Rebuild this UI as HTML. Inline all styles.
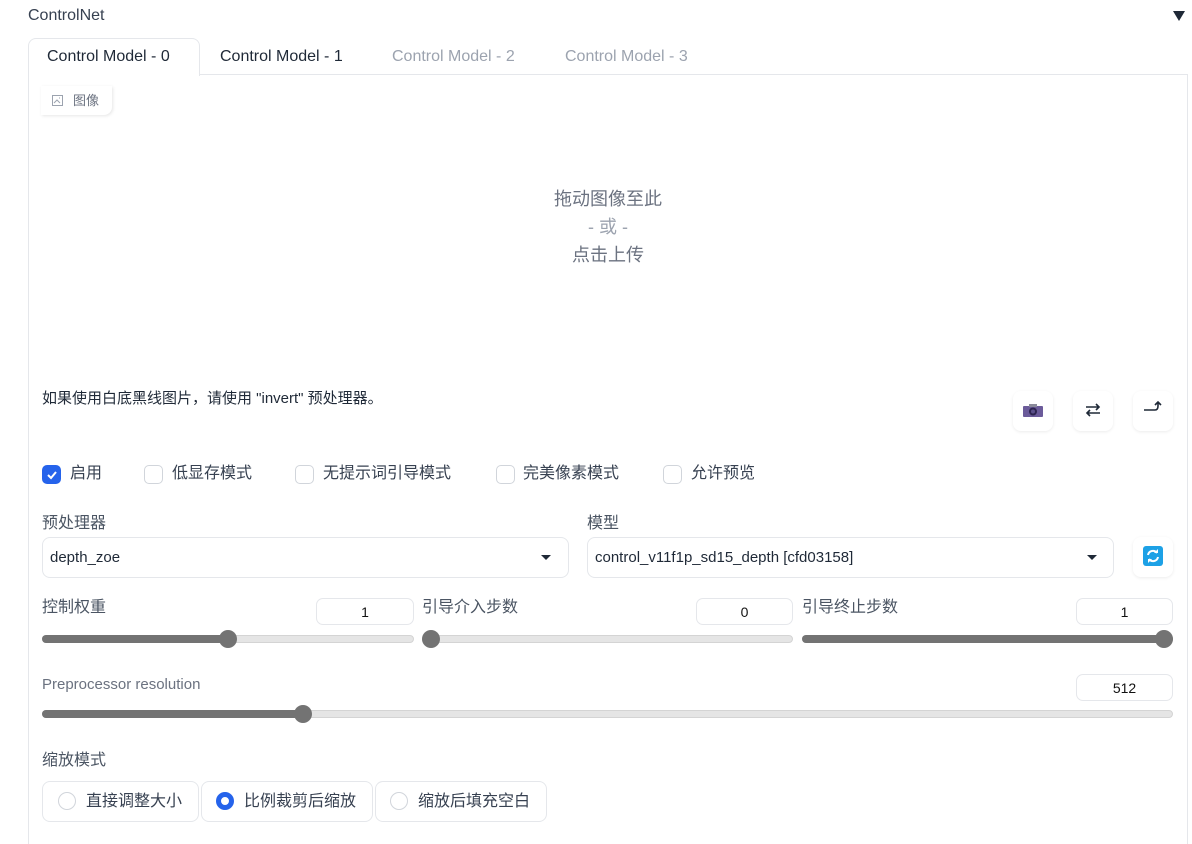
<!DOCTYPE html>
<html><head><meta charset="utf-8"><style>
*{box-sizing:border-box;margin:0;padding:0}
body{width:1192px;height:831px;background:#fff;font-family:"Liberation Sans","Noto Sans CJK SC",sans-serif;color:#374151;position:relative;overflow:hidden;font-size:16px}
.a{position:absolute}
.t{white-space:nowrap}
.box{position:absolute;border:1px solid #e5e7eb;border-radius:8px;background:#fff}
.track{position:absolute;height:8px;border-radius:4px;background:#e5e5e5;border:1px solid #d4d4d4}
.fill{position:absolute;height:8px;border-radius:4px;background:#737373}
.thumb{position:absolute;width:18px;height:18px;border-radius:50%;background:#737373}
.num{position:absolute;border:1px solid #e5e7eb;border-radius:7px;height:27px;text-align:center;font-size:14px;line-height:26px;color:#111}
.cb{position:absolute;width:19px;height:19px;border:1px solid #d1d5db;border-radius:5px;background:#fff}
.lbl{position:absolute;font-size:16px;line-height:24px;color:#374151;white-space:nowrap}
.btn{position:absolute;width:40px;height:40px;border-radius:8px;box-shadow:0 1px 3px rgba(0,0,0,.08)}
</style></head><body>
<div class="a t" style="left:28px;top:7px;font-size:16px;color:#374151">ControlNet</div>
<svg class="a" style="left:1173px;top:10px" width="12" height="12"><path d="M0 1H12L6 11Z" fill="#1f2937"/></svg>

<div class="a" style="left:28px;top:74px;width:1160px;height:770px;border:1px solid #e5e7eb;border-bottom:none"></div>
<div class="a" style="left:28px;top:38px;width:172px;height:38px;border:1px solid #e5e7eb;border-bottom:none;border-radius:8px 8px 0 0;background:#fff"></div>
<div class="a t" style="left:47px;top:48px;color:#1f2937">Control Model - 0</div>
<div class="a t" style="left:220px;top:48px;color:#1f2937">Control Model - 1</div>
<div class="a t" style="left:392px;top:48px;color:#9ca3af">Control Model - 2</div>
<div class="a t" style="left:565px;top:48px;color:#9ca3af">Control Model - 3</div>

<div class="a" style="left:41px;top:86px;width:71px;height:29px;border-radius:0 0 8px 0;box-shadow:1px 1px 3px rgba(0,0,0,.1)"></div>
<svg class="a" style="left:52px;top:95px" width="11" height="11"><rect x=".5" y=".5" width="10" height="10" fill="none" stroke="#9ca3af"/><path d="M2 8L5 5L8 8M7 3h1" stroke="#9ca3af" fill="none"/></svg>
<div class="a t" style="left:73px;top:92px;font-size:13px;line-height:18px;color:#6b7280">图像</div>

<div class="a t" style="left:0;width:1216px;top:185px;text-align:center;font-size:18px;color:#6b7280;line-height:28px">拖动图像至此<br><span style="color:#9ca3af">- 或 -</span><br>点击上传</div>

<div class="a t" style="left:42px;top:388px;font-size:15px;line-height:22px;color:#1f2937">如果使用白底黑线图片，请使用 "invert" 预处理器。</div>
<div class="btn" style="left:1013px;top:391px"></div>
<svg class="a" style="left:1023px;top:403px" width="20" height="15"><rect x="0" y="3" width="20" height="11" rx="1" fill="#6b5b9a"/><rect x="6" y="1" width="8" height="3" fill="#8a8a9a"/><circle cx="10" cy="8.5" r="4" fill="#2d2450"/><circle cx="10" cy="8.5" r="2" fill="#5a4f8a"/></svg>
<div class="btn" style="left:1073px;top:391px"></div>
<svg class="a" style="left:1084px;top:402px" width="18" height="16"><path d="M2 5H15M12 2L15 5L12 8M16 11H3M6 8L3 11L6 14" stroke="#1f2937" stroke-width="1.6" fill="none"/></svg>
<div class="btn" style="left:1133px;top:391px"></div>
<svg class="a" style="left:1143px;top:400px" width="20" height="14"><path d="M1 10H12Q15 10 15 6V3M12 5L15 2L18 5" stroke="#1f2937" stroke-width="1.6" fill="none"/></svg>

<div class="cb" style="left:42px;top:465px;background:#2563eb;border-color:#2563eb"></div>
<svg class="a" style="left:46px;top:469px" width="12" height="12"><path d="M2 6L5 9L10 3" stroke="#fff" stroke-width="2" fill="none"/></svg>
<div class="lbl" style="left:70px;top:462px">启用</div>
<div class="cb" style="left:144px;top:465px"></div><div class="lbl" style="left:172px;top:462px">低显存模式</div>
<div class="cb" style="left:295px;top:465px"></div><div class="lbl" style="left:323px;top:462px">无提示词引导模式</div>
<div class="cb" style="left:496px;top:465px"></div><div class="lbl" style="left:523px;top:462px">完美像素模式</div>
<div class="cb" style="left:663px;top:465px"></div><div class="lbl" style="left:691px;top:462px">允许预览</div>

<div class="lbl" style="left:42px;top:512px;color:#4b5563">预处理器</div>
<div class="lbl" style="left:587px;top:512px;color:#4b5563">模型</div>
<div class="box" style="left:42px;top:537px;width:527px;height:41px"></div>
<div class="lbl" style="left:50px;top:546px;font-size:15px;color:#1f2937">depth_zoe</div>
<svg class="a" style="left:540px;top:554px" width="12" height="8"><path d="M1 1H11L6 6Z" fill="#1f2937"/></svg>
<div class="box" style="left:587px;top:537px;width:527px;height:41px"></div>
<div class="lbl" style="left:595px;top:546px;font-size:15px;color:#1f2937">control_v11f1p_sd15_depth [cfd03158]</div>
<svg class="a" style="left:1086px;top:554px" width="12" height="8"><path d="M1 1H11L6 6Z" fill="#1f2937"/></svg>
<div class="btn" style="left:1133px;top:537px"></div>
<svg class="a" style="left:1143px;top:546px" width="20" height="20"><rect width="20" height="20" rx="3" fill="#1da1e6"/><path d="M5 9A5 5 0 0 1 14 7M15 11A5 5 0 0 1 6 13" stroke="#fff" stroke-width="2" fill="none"/><path d="M11 7H15V3Z M9 13H5V17Z" fill="#fff"/></svg>

<div class="lbl" style="left:42px;top:596px;color:#4b5563">控制权重</div>
<div class="num" style="left:316px;top:598px;width:98px">1</div>
<div class="lbl" style="left:422px;top:596px;color:#4b5563">引导介入步数</div>
<div class="num" style="left:696px;top:598px;width:97px">0</div>
<div class="lbl" style="left:802px;top:596px;color:#4b5563">引导终止步数</div>
<div class="num" style="left:1076px;top:598px;width:97px">1</div>

<div class="track" style="left:42px;top:635px;width:372px"></div><div class="fill" style="left:42px;top:635px;width:186px"></div><div class="thumb" style="left:219px;top:630px"></div>
<div class="track" style="left:422px;top:635px;width:371px"></div><div class="thumb" style="left:422px;top:630px"></div>
<div class="track" style="left:802px;top:635px;width:371px"></div><div class="fill" style="left:802px;top:635px;width:371px"></div><div class="thumb" style="left:1155px;top:630px"></div>

<div class="lbl" style="left:42px;top:673px;font-size:15px;color:#6b7280">Preprocessor resolution</div>
<div class="num" style="left:1076px;top:674px;width:97px">512</div>
<div class="track" style="left:42px;top:710px;width:1131px"></div><div class="fill" style="left:42px;top:710px;width:262px"></div><div class="thumb" style="left:294px;top:705px"></div>

<div class="lbl" style="left:42px;top:749px;color:#4b5563">缩放模式</div>
<div class="box" style="left:42px;top:781px;width:157px;height:41px"></div>
<div class="a" style="left:58px;top:792px;width:18px;height:18px;border-radius:50%;border:1px solid #d1d5db"></div>
<div class="lbl" style="left:86px;top:790px">直接调整大小</div>
<div class="box" style="left:201px;top:781px;width:172px;height:41px"></div>
<div class="a" style="left:216px;top:792px;width:18px;height:18px;border-radius:50%;background:#fff;border:5px solid #2563eb"></div>
<div class="lbl" style="left:244px;top:790px">比例裁剪后缩放</div>
<div class="box" style="left:375px;top:781px;width:172px;height:41px"></div>
<div class="a" style="left:390px;top:792px;width:18px;height:18px;border-radius:50%;border:1px solid #d1d5db"></div>
<div class="lbl" style="left:418px;top:790px">缩放后填充空白</div>
</body></html>
